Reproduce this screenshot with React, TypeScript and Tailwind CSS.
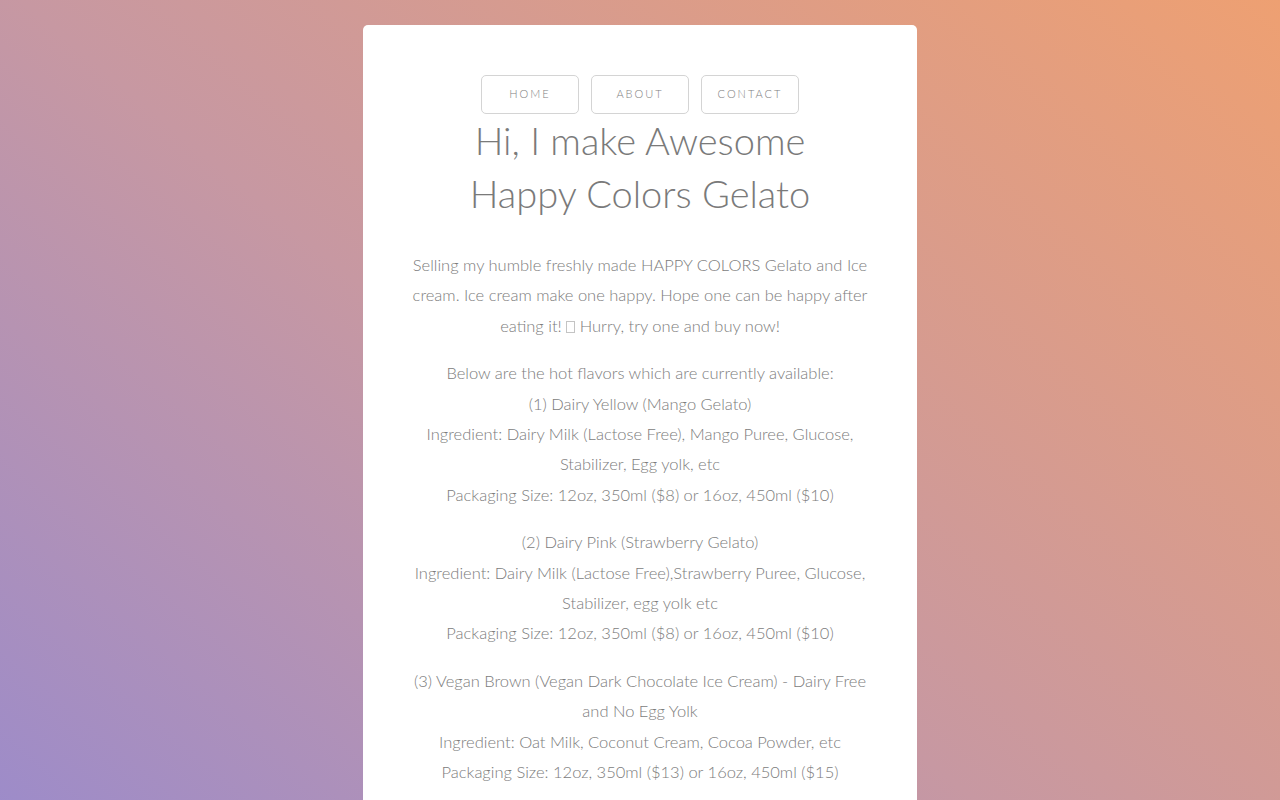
import React from "react";

const navItems = ["Home", "About", "Contact"];

export default function App() {
  return (
    <div className="min-h-screen w-full bg-[linear-gradient(40deg,#9b8bcb_0%,#c798a2_45%,#eea072_100%)] font-['Lato','Liberation_Sans',sans-serif] font-light">
      <div className="flex justify-center pt-[25px]">
        <div className="w-[554px] bg-white rounded-[5px] px-[42px] pt-[50px] pb-10 text-center">
          <nav className="flex justify-center gap-[12px]">
            {navItems.map((item) => (
              <a
                key={item}
                href="#"
                className="w-[98px] h-[39px] flex items-center justify-center border border-[#d4d4d4] rounded-[5px] text-[11px] uppercase tracking-[2px] text-[#7e7e7e] font-light"
              >
                {item}
              </a>
            ))}
          </nav>
          <h1 className="text-[38px] leading-[53px] text-[#7a7a7a] font-light mt-0">
            Hi, I make Awesome
            <br />
            Happy Colors Gelato
          </h1>
          <div className="mt-[30px] text-[16.5px] leading-[30.4px] text-[#7c7c7c]">
            <p className="mb-[17px]">
              Selling my humble freshly made HAPPY COLORS Gelato and Ice cream. Ice cream make one happy. Hope one can be
              happy after eating it!{" "}
              <span className="inline-block w-[9px] h-[12px] border border-[#c4c4c4] align-[-1px]"></span> Hurry, try
              one and buy now!
            </p>
            <p className="mb-[17px]">
              Below are the hot flavors which are currently available:
              <br />
              (1) Dairy Yellow (Mango Gelato)
              <br />
              Ingredient: Dairy Milk (Lactose Free), Mango Puree, Glucose, Stabilizer, Egg yolk, etc
              <br />
              Packaging Size: 12oz, 350ml ($8) or 16oz, 450ml ($10)
            </p>
            <p className="mb-[17px]">
              (2) Dairy Pink (Strawberry Gelato)
              <br />
              Ingredient: Dairy Milk (Lactose Free),Strawberry Puree, Glucose, Stabilizer, egg yolk etc
              <br />
              Packaging Size: 12oz, 350ml ($8) or 16oz, 450ml ($10)
            </p>
            <p className="mb-[17px]">
              (3) Vegan Brown (Vegan Dark Chocolate Ice Cream) - Dairy Free and No Egg Yolk
              <br />
              Ingredient: Oat Milk, Coconut Cream, Cocoa Powder, etc
              <br />
              Packaging Size: 12oz, 350ml ($13) or 16oz, 450ml ($15)
            </p>
          </div>
        </div>
      </div>
    </div>
  );
}
